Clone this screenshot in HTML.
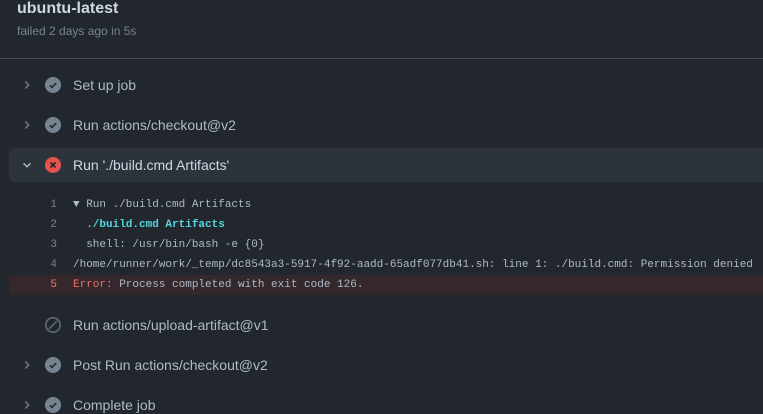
<!DOCTYPE html>
<html style="overflow:hidden;height:414px"><head><style>
body{margin:0;background:#22272e;width:763px;height:414px;overflow:hidden;font-family:"Liberation Sans",sans-serif;color:#adbac7;position:relative}
.t{position:absolute;left:17px;top:0px;font-size:16px;font-weight:bold;color:#cdd9e5}
.s{position:absolute;left:17px;top:24px;font-size:12px;color:#768390}
.hr{position:absolute;left:0;right:0;top:58px;height:1px;background:#444c56}
.row{position:absolute;left:9px;right:0;height:34px;font-size:14px;color:#adbac7}
.row.exp{background:#2d333b;border-radius:6px 0 0 6px}
.ch{position:absolute;left:11px;top:10px}
.ic{position:absolute;left:36px;top:9px}
.lbl{position:absolute;left:64px;top:9px}
.code{position:absolute;left:9px;right:0;font-family:"Liberation Mono",monospace;font-size:11px;height:20px;line-height:20px;white-space:pre;color:#adbac7}
.n{position:absolute;left:0;width:48px;text-align:right;color:#768390}
.c{position:absolute;left:64px}
</style></head><body>
<div class="t">ubuntu-latest</div>
<div class="s">failed 2 days ago in 5s</div>
<div class="hr"></div>

<div class="row" style="top:68px"><svg class="ch" width="14" height="14" viewBox="0 0 16 16"><path d="M6 4l4 4-4 4" stroke="#768390" stroke-width="1.5" fill="none"/></svg><svg class="ic" width="16" height="16" viewBox="0 0 16 16"><circle cx="8" cy="8" r="8" fill="#768390"/><path d="M4.8 8.3l2.2 2.1 4.2-4.4" stroke="#22272e" stroke-width="1.6" fill="none"/></svg><span class="lbl">Set up job</span></div>
<div class="row" style="top:108px"><svg class="ch" width="14" height="14" viewBox="0 0 16 16"><path d="M6 4l4 4-4 4" stroke="#768390" stroke-width="1.5" fill="none"/></svg><svg class="ic" width="16" height="16" viewBox="0 0 16 16"><circle cx="8" cy="8" r="8" fill="#768390"/><path d="M4.8 8.3l2.2 2.1 4.2-4.4" stroke="#22272e" stroke-width="1.6" fill="none"/></svg><span class="lbl">Run actions/checkout@v2</span></div>
<div class="row exp" style="top:148px"><svg class="ch" width="14" height="14" viewBox="0 0 16 16"><path d="M4 6l4 4 4-4" stroke="#adbac7" stroke-width="1.6" fill="none"/></svg><svg class="ic" width="16" height="16" viewBox="0 0 16 16"><circle cx="8" cy="8" r="8" fill="#e5534b"/><path d="M5.5 5.5l5 5M10.5 5.5l-5 5" stroke="#22272e" stroke-width="1.6"/></svg><span class="lbl" style="color:#cdd9e5">Run './build.cmd Artifacts'</span></div>

<div class="code" style="top:195px"><span class="n">1</span><span class="c">▼ Run ./build.cmd Artifacts</span></div>
<div class="code" style="top:215px"><span class="n">2</span><span class="c" style="color:#56d4dd;font-weight:bold">  ./build.cmd Artifacts</span></div>
<div class="code" style="top:235px"><span class="n">3</span><span class="c">  shell: /usr/bin/bash -e {0}</span></div>
<div class="code" style="top:255px"><span class="n">4</span><span class="c">/home/runner/work/_temp/dc8543a3-5917-4f92-aadd-65adf077db41.sh: line 1: ./build.cmd: Permission denied</span></div>
<div class="code" style="top:275px;background:#35282d"><span class="n" style="color:#f47067">5</span><span class="c"><span style="color:#f47067">Error:</span> Process completed with exit code 126.</span></div>

<div class="row" style="top:308px"><svg class="ic" width="16" height="16" viewBox="0 0 16 16"><circle cx="8" cy="8" r="7.2" stroke="#636e7b" stroke-width="1.5" fill="none"/><path d="M4 12L12 4" stroke="#636e7b" stroke-width="1.5"/></svg><span class="lbl">Run actions/upload-artifact@v1</span></div>
<div class="row" style="top:348px"><svg class="ch" width="14" height="14" viewBox="0 0 16 16"><path d="M6 4l4 4-4 4" stroke="#768390" stroke-width="1.5" fill="none"/></svg><svg class="ic" width="16" height="16" viewBox="0 0 16 16"><circle cx="8" cy="8" r="8" fill="#768390"/><path d="M4.8 8.3l2.2 2.1 4.2-4.4" stroke="#22272e" stroke-width="1.6" fill="none"/></svg><span class="lbl">Post Run actions/checkout@v2</span></div>
<div class="row" style="top:388px;height:26px"><svg class="ch" width="14" height="14" viewBox="0 0 16 16"><path d="M6 4l4 4-4 4" stroke="#768390" stroke-width="1.5" fill="none"/></svg><svg class="ic" width="16" height="16" viewBox="0 0 16 16"><circle cx="8" cy="8" r="8" fill="#768390"/><path d="M4.8 8.3l2.2 2.1 4.2-4.4" stroke="#22272e" stroke-width="1.6" fill="none"/></svg><span class="lbl">Complete job</span></div>
</body></html>
